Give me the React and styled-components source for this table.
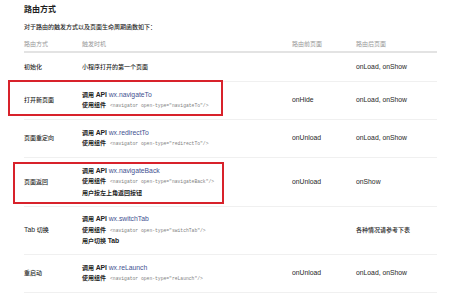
import React from 'react';
import styled, { createGlobalStyle } from 'styled-components';

const GlobalStyle = createGlobalStyle`
    html, body {
        margin: 0;
        padding: 0;
        background: #ffffff;
    }
    body {
        font-family: "Liberation Sans", "Noto Sans CJK SC", sans-serif;
        color: #262626;
    }
`;

const Page = styled.div`
    width: 474px;
    height: 295px;
    box-sizing: border-box;
    padding: 4px 37px 0 24px;
    overflow: hidden;
`;
const Title = styled.h2`
    margin: 0;
    font-size: 8px;
    line-height: 12px;
    font-weight: 700;
    color: #1f1f1f;
`;
const Intro = styled.p`
    margin: 6px 0 0;
    font-size: 6px;
    line-height: 10px;
    font-weight: 500;
    color: #262626;
`;
const Table = styled.div`
    margin-top: 4px;
    display: flex;
    flex-direction: column;
`;
const Row = styled.div`
    position: relative;
    display: grid;
    grid-template-columns: 58px 210px 64px 1fr;
    align-items: center;
    min-height: ${p => (p.$head ? 'auto' : '28px')};
    padding: ${p => (p.$head ? '3px 0 2px' : '0')};
    border-bottom: ${p => (p.$head ? '2px solid #e3e3e3' : '1px solid #f0f0f0')};
`;
const HeadCell = styled.div`
    font-size: 6px;
    line-height: 10px;
    color: #999999;
`;
const Cell = styled.div`
    padding: 7.5px 0;
    font-size: 6px;
    line-height: 10.5px;
    font-weight: 500;
    color: #262626;
`;
const Lat = styled.span`
    font-size: 6.8px;
`;
const Label = styled.span`
    font-weight: 700;
    color: #222222;
`;
const Api = styled.span`
    font-size: 6.8px;
    color: #3f5191;
`;
const Code = styled.code`
    margin-left: 4px;
    font-family: "Liberation Mono", monospace;
    font-size: 4.7px;
    color: #7f7f7f;
`;
const Line = styled.div`
    white-space: nowrap;
`;
const Highlight = styled.div`
    position: absolute;
    left: ${p => p.$left}px;
    top: ${p => p.$top}px;
    width: ${p => p.$w}px;
    height: ${p => p.$h}px;
    box-sizing: border-box;
    border: 2px solid #d8222b;
    pointer-events: none;
`;

const CallApi = ({ name }) => (
    <Line>
        <Label>调用 <Lat>API</Lat></Label> <Api>{name}</Api>
    </Line>
);
const UseComp = ({ type }) => (
    <Line>
        <Label>使用组件</Label>
        <Code>{`<navigator open-type="${type}"/>`}</Code>
    </Line>
);

const rows = [
    { kind: '初始化', trigger: <Line>小程序打开的第一个页面</Line>, before: '', after: 'onLoad, onShow' },
    {
        kind: '打开新页面',
        trigger: <><CallApi name="wx.navigateTo" /><UseComp type="navigateTo" /></>,
        before: 'onHide', after: 'onLoad, onShow',
        box: { left: -16, top: -2, w: 215, h: 36 },
    },
    {
        kind: '页面重定向',
        trigger: <><CallApi name="wx.redirectTo" /><UseComp type="redirectTo" /></>,
        before: 'onUnload', after: 'onLoad, onShow',
    },
    {
        kind: '页面返回',
        trigger: <><CallApi name="wx.navigateBack" /><UseComp type="navigateBack" /><Line><Label>用户按左上角返回按钮</Label></Line></>,
        before: 'onUnload', after: 'onShow',
        box: { left: -11, top: 3.5, w: 211, h: 42.5 },
    },
    {
        kind: <><Lat>Tab</Lat> 切换</>,
        trigger: <><CallApi name="wx.switchTab" /><UseComp type="switchTab" /><Line><Label>用户切换 <Lat>Tab</Lat></Label></Line></>,
        before: '', after: '各种情况请参考下表', afterCn: true,
    },
    {
        kind: '重启动',
        trigger: <><CallApi name="wx.reLaunch" /><UseComp type="reLaunch" /></>,
        before: 'onUnload', after: 'onLoad, onShow',
    },
];

const App = () => (
    <Page>
        <GlobalStyle />
        <Title>路由方式</Title>
        <Intro>对于路由的触发方式以及页面生命周期函数如下：</Intro>
        <Table>
            <Row $head>
                <HeadCell>路由方式</HeadCell>
                <HeadCell>触发时机</HeadCell>
                <HeadCell>路由前页面</HeadCell>
                <HeadCell>路由后页面</HeadCell>
            </Row>
            {rows.map((r, i) => (
                <Row key={i}>
                    <Cell>{r.kind}</Cell>
                    <Cell>{r.trigger}</Cell>
                    <Cell><Lat>{r.before}</Lat></Cell>
                    <Cell>{r.afterCn ? r.after : <Lat>{r.after}</Lat>}</Cell>
                    {r.box && <Highlight $left={r.box.left} $top={r.box.top} $w={r.box.w} $h={r.box.h} />}
                </Row>
            ))}
        </Table>
    </Page>
);

export default App;
